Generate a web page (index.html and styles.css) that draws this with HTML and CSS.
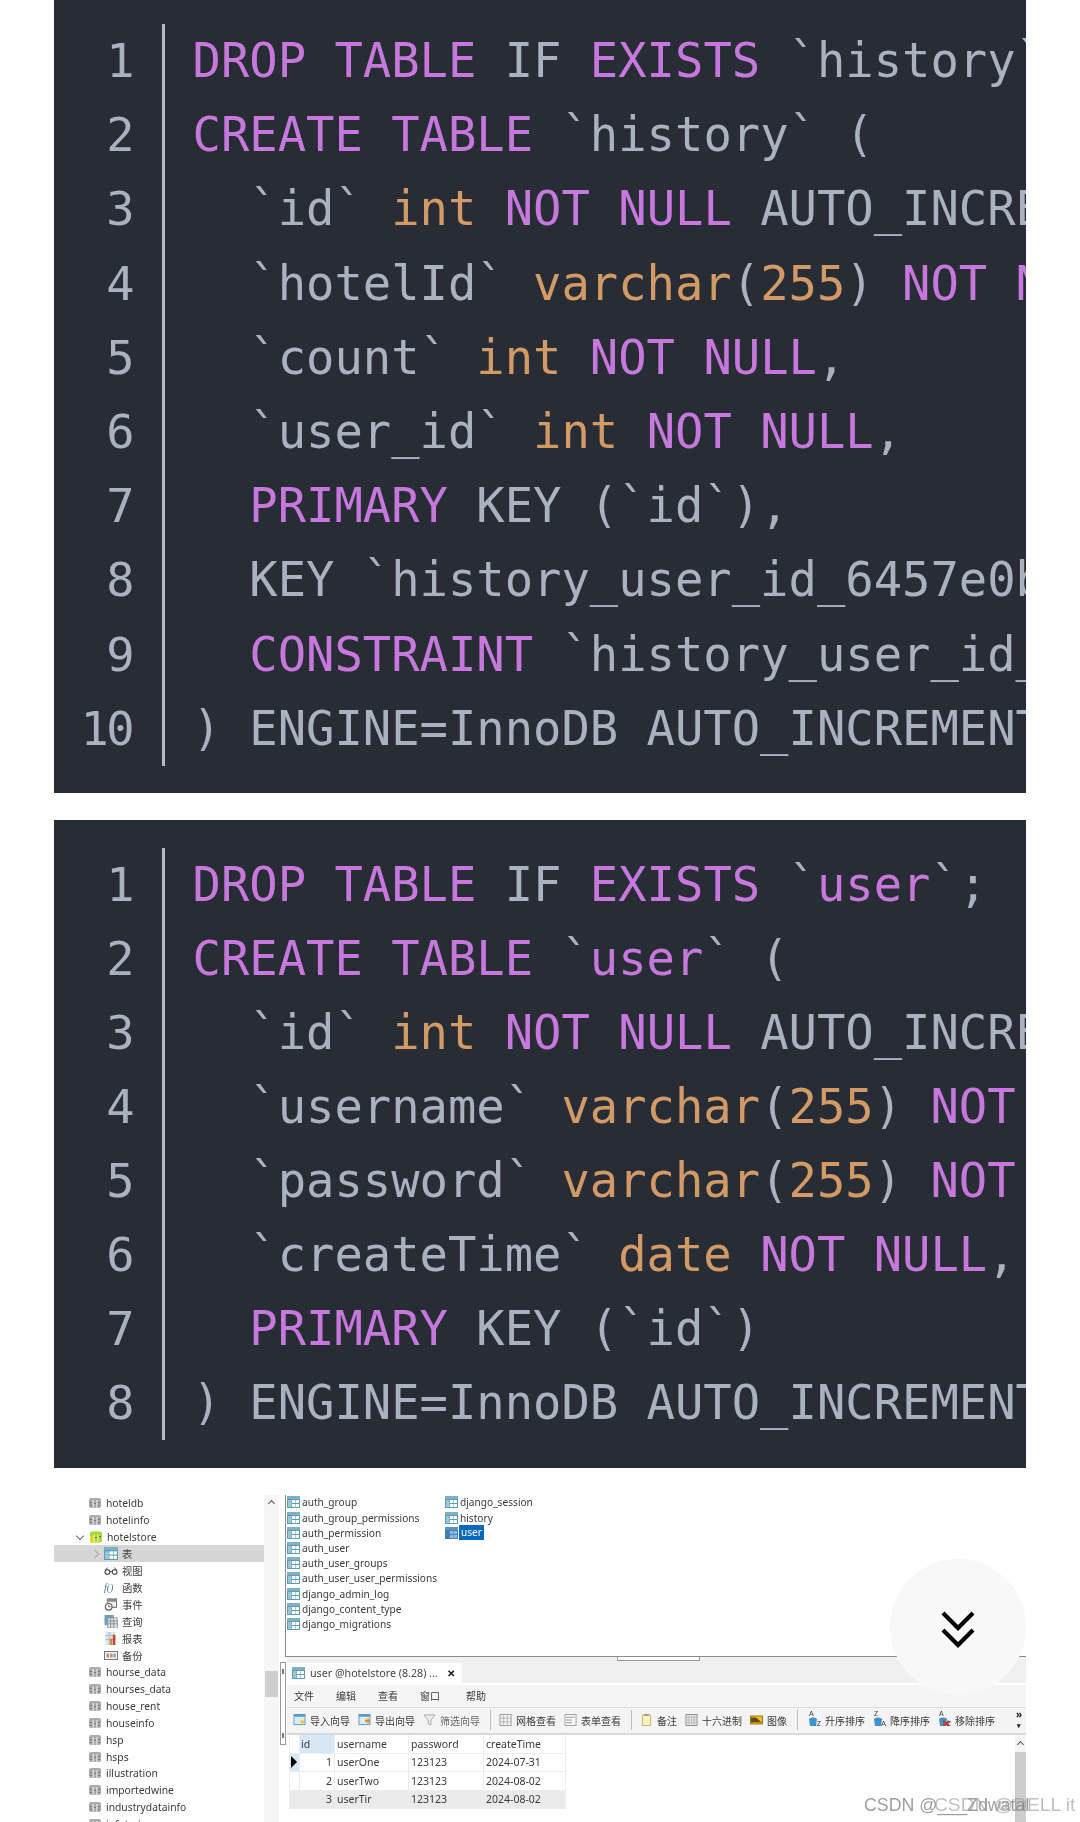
FILE: index.html
```html
<!DOCTYPE html>
<html lang="zh-CN">
<head>
<meta charset="utf-8">
<title>history / user</title>
<link rel="stylesheet" href="styles.css">
</head>
<body>
<svg class="defs" width="0" height="0" aria-hidden="true">
  <symbol id="db" viewBox="0 0 12 12"><rect x="0" y="1" width="12" height="10" rx="2" fill="#a9abad"/><rect x="3.6" y="3" width="1" height="8" fill="#eee"/><rect x="7.4" y="3" width="1" height="8" fill="#eee"/><rect x="1" y="5" width="2" height="1" fill="#777"/><rect x="5" y="6" width="2" height="1" fill="#777"/><rect x="9" y="5" width="2" height="1" fill="#777"/><rect x="1" y="8" width="2" height="1" fill="#777"/><rect x="9" y="8" width="2" height="1" fill="#777"/></symbol>
  <symbol id="dbg" viewBox="0 0 12 12"><rect x="0" y="0.5" width="12" height="11" rx="2" fill="#a8d42c"/><rect x="0" y="5" width="4" height="6.5" fill="#e8d428"/><rect x="3.6" y="3" width="1" height="8" fill="#f6f6c8"/><rect x="7.4" y="3" width="1" height="8" fill="#f6f6c8"/><rect x="5" y="6" width="2" height="1" fill="#557a10"/><rect x="9" y="5" width="2" height="1" fill="#557a10"/></symbol>
  <symbol id="tbl" viewBox="0 0 13 12"><rect x="0" y="0" width="13" height="12" fill="#5c9cb8"/><rect x="0" y="0" width="13" height="3" fill="#7fb0c4"/><rect x="5" y="4" width="3.5" height="3" fill="#fff"/><rect x="9" y="4" width="3" height="3" fill="#fff"/><rect x="5" y="8" width="3.5" height="3" fill="#fff"/><rect x="9" y="8" width="3" height="3" fill="#fff"/><rect x="1" y="4" width="3.5" height="7" fill="#9cc6d8"/></symbol>
  <symbol id="tblsel" viewBox="0 0 13 12"><rect x="0" y="0" width="13" height="12" fill="#3f7fb5"/><rect x="0" y="0" width="13" height="3" fill="#5d93bf"/><rect x="5" y="4" width="3.5" height="3" fill="#8fb9dd"/><rect x="9" y="4" width="3" height="3" fill="#8fb9dd"/><rect x="5" y="8" width="3.5" height="3" fill="#8fb9dd"/><rect x="9" y="8" width="3" height="3" fill="#8fb9dd"/></symbol>
  <symbol id="glasses" viewBox="0 0 14 12"><circle cx="3.4" cy="7.5" r="2.4" fill="none" stroke="#555" stroke-width="1.2"/><circle cx="10.6" cy="7.5" r="2.4" fill="none" stroke="#555" stroke-width="1.2"/><path d="M5.5 7h3M1.5 5.5 3.5 3M12.5 5.5 10.5 3" stroke="#555" fill="none"/></symbol>
  <symbol id="event" viewBox="0 0 14 14"><rect x="3" y="1" width="10" height="9" fill="#eee" stroke="#666"/><rect x="3" y="1" width="10" height="3" fill="#8a8a8a"/><circle cx="4.5" cy="9.5" r="3.6" fill="#fff" stroke="#555" stroke-width="1.2"/><path d="M4.5 7.5v2h2" stroke="#555" fill="none"/></symbol>
  <symbol id="query" viewBox="0 0 14 14"><rect x="0" y="0" width="10" height="11" fill="#6ba4bd"/><rect x="3" y="3" width="11" height="11" fill="#d6dde2" stroke="#777" stroke-width=".6"/><path d="M3 6.5h11M3 9.5h11M6.5 3v11M10 3v11" stroke="#777" stroke-width=".7"/></symbol>
  <symbol id="report" viewBox="0 0 14 14"><rect x="1" y="0" width="11" height="14" fill="#dfe6ea"/><path d="M1 4h11M1 8h11M5 0v14" stroke="#9db9c6"/><rect x="6" y="7" width="2.4" height="7" fill="#d08a2a"/><rect x="9" y="3" width="2.6" height="11" fill="#c4452b"/></symbol>
  <symbol id="backup" viewBox="0 0 14 11"><rect x=".5" y="1.5" width="13" height="8" fill="#f4f4f4" stroke="#777"/><rect x="2.5" y="3.5" width="2.6" height="4" fill="#999"/><rect x="6" y="3.5" width="2.6" height="4" fill="#c49a5a"/><rect x="9.5" y="3.5" width="2.2" height="4" fill="#999"/></symbol>
  <symbol id="import" viewBox="0 0 13 13"><rect x="0" y="0" width="13" height="12" fill="#5c9cb8"/><rect x="1" y="3" width="11" height="8" fill="#dcecf3"/><path d="M7 7h5l-2.500 5z" fill="#e6c72a"/></symbol>
  <symbol id="export" viewBox="0 0 13 13"><rect x="0" y="0" width="13" height="12" fill="#5c9cb8"/><rect x="1" y="3" width="11" height="8" fill="#dcecf3"/><path d="M7 6h3V4l3 3.500-3 3.500V9H7z" fill="#e2912a"/></symbol>
  <symbol id="filter" viewBox="0 0 13 13"><path d="M.5 1h12L8 6.500V12L5 10.500V6.500z" fill="#eceff0" stroke="#a0a4a6"/></symbol>
  <symbol id="grid" viewBox="0 0 13 13"><rect x=".5" y=".5" width="12" height="12" fill="#f4f4f4" stroke="#9a9a9a"/><path d="M4.500 0v13M8.500 0v13M0 4.500h13M0 8.500h13" stroke="#b4b4b4"/></symbol>
  <symbol id="form" viewBox="0 0 13 13"><rect x=".5" y=".5" width="12" height="12" fill="#fbfbfb" stroke="#9a9a9a"/><path d="M2 3.500h9M2 6.500h6M2 9.500h6" stroke="#888"/></symbol>
  <symbol id="note" viewBox="0 0 13 13"><rect x="2" y="1" width="9" height="11.500" fill="#fdf4bd" stroke="#b8a456" stroke-width=".8"/><rect x="4" y="0" width="5" height="2" fill="#999"/></symbol>
  <symbol id="hex" viewBox="0 0 13 13"><rect x=".5" y=".5" width="12" height="12" fill="#e8e8e8" stroke="#888"/><path d="M3.500 2v9M6.500 2v9M9.500 2v9M2 3.500h9M2 6.500h9M2 9.500h9" stroke="#999" stroke-dasharray="1 1"/></symbol>
  <symbol id="image" viewBox="0 0 13 11"><rect x="0" y="1" width="13" height="9" fill="#8a7a20"/><rect x="1" y="2" width="11" height="7" fill="#f2c31c"/><path d="M1 3h5l6 5H1z" fill="#6b4a18"/></symbol>
  <symbol id="asc" viewBox="0 0 13 12"><path d="M1 5c2-2 6-2 8 0l-1 7H2z" fill="#3f93c8"/></symbol>
  <symbol id="clear" viewBox="0 0 13 12"><path d="M1 5c2-2 6-2 8 0l-1 7H2z" fill="#3f93c8"/><path d="M5 7l6 5M11 7l-6 5" stroke="#d0342c" stroke-width="1.800"/></symbol>
</svg>

<main class="page">
  <section class="code code-first">
    <div class="row"><span class="no">1</span><code class="src"><b>DROP</b> <b>TABLE</b> IF <b>EXISTS</b> `history`;</code></div>
    <div class="row"><span class="no">2</span><code class="src"><b>CREATE</b> <b>TABLE</b> `history` (</code></div>
    <div class="row"><span class="no">3</span><code class="src">  `id` <i>int</i> <b>NOT</b> <b>NULL</b> AUTO_INCREMENT,</code></div>
    <div class="row"><span class="no">4</span><code class="src">  `hotelId` <i>varchar</i>(<i>255</i>) <b>NOT</b> <b>NULL</b>,</code></div>
    <div class="row"><span class="no">5</span><code class="src">  `count` <i>int</i> <b>NOT</b> <b>NULL</b>,</code></div>
    <div class="row"><span class="no">6</span><code class="src">  `user_id` <i>int</i> <b>NOT</b> <b>NULL</b>,</code></div>
    <div class="row"><span class="no">7</span><code class="src">  <b>PRIMARY</b> KEY (`id`),</code></div>
    <div class="row"><span class="no">8</span><code class="src">  KEY `history_user_id_6457e0b5`</code></div>
    <div class="row"><span class="no">9</span><code class="src">  <b>CONSTRAINT</b> `history_user_id_6457e0b5`</code></div>
    <div class="row"><span class="no">10</span><code class="src">) ENGINE=InnoDB AUTO_INCREMENT=1;</code></div>
  </section>

  <section class="code code-second">
    <div class="row"><span class="no">1</span><code class="src"><b>DROP</b> <b>TABLE</b> IF <b>EXISTS</b> `<b>user</b>`;</code></div>
    <div class="row"><span class="no">2</span><code class="src"><b>CREATE</b> <b>TABLE</b> `<b>user</b>` (</code></div>
    <div class="row"><span class="no">3</span><code class="src">  `id` <i>int</i> <b>NOT</b> <b>NULL</b> AUTO_INCREMENT,</code></div>
    <div class="row"><span class="no">4</span><code class="src">  `username` <i>varchar</i>(<i>255</i>) <b>NOT</b> <b>NULL</b>,</code></div>
    <div class="row"><span class="no">5</span><code class="src">  `password` <i>varchar</i>(<i>255</i>) <b>NOT</b> <b>NULL</b>,</code></div>
    <div class="row"><span class="no">6</span><code class="src">  `createTime` <i>date</i> <b>NOT</b> <b>NULL</b>,</code></div>
    <div class="row"><span class="no">7</span><code class="src">  <b>PRIMARY</b> KEY (`id`)</code></div>
    <div class="row"><span class="no">8</span><code class="src">) ENGINE=InnoDB AUTO_INCREMENT=1;</code></div>
  </section>

  <section class="shot">
    <nav class="tree">
      <div class="node"><svg class="ic"><use href="#db"/></svg>hoteldb</div>
      <div class="node"><svg class="ic"><use href="#db"/></svg>hotelinfo</div>
      <div class="node open"><span class="chev down"></span><svg class="ic"><use href="#dbg"/></svg>hotelstore</div>
      <div class="node sub active"><span class="chev right"></span><svg class="ic2"><use href="#tbl"/></svg>表</div>
      <div class="node sub"><svg class="ic2"><use href="#glasses"/></svg>视图</div>
      <div class="node sub"><span class="ic2 fx">f()</span>函数</div>
      <div class="node sub"><svg class="ic2"><use href="#event"/></svg>事件</div>
      <div class="node sub"><svg class="ic2"><use href="#query"/></svg>查询</div>
      <div class="node sub"><svg class="ic2"><use href="#report"/></svg>报表</div>
      <div class="node sub"><svg class="ic2"><use href="#backup"/></svg>备份</div>
      <div class="node"><svg class="ic"><use href="#db"/></svg>hourse_data</div>
      <div class="node"><svg class="ic"><use href="#db"/></svg>hourses_data</div>
      <div class="node"><svg class="ic"><use href="#db"/></svg>house_rent</div>
      <div class="node"><svg class="ic"><use href="#db"/></svg>houseinfo</div>
      <div class="node"><svg class="ic"><use href="#db"/></svg>hsp</div>
      <div class="node"><svg class="ic"><use href="#db"/></svg>hsps</div>
      <div class="node"><svg class="ic"><use href="#db"/></svg>illustration</div>
      <div class="node"><svg class="ic"><use href="#db"/></svg>importedwine</div>
      <div class="node"><svg class="ic"><use href="#db"/></svg>industrydatainfo</div>
      <div class="node"><svg class="ic"><use href="#db"/></svg>infotrain</div>
    </nav>
    <div class="treebar"><span class="caret-up"></span><span class="treethumb"></span></div>
    <div class="panes">
      <div class="objects">
        <div class="obj"><svg class="ic3"><use href="#tbl"/></svg>auth_group</div>
        <div class="obj"><svg class="ic3"><use href="#tbl"/></svg>auth_group_permissions</div>
        <div class="obj"><svg class="ic3"><use href="#tbl"/></svg>auth_permission</div>
        <div class="obj"><svg class="ic3"><use href="#tbl"/></svg>auth_user</div>
        <div class="obj"><svg class="ic3"><use href="#tbl"/></svg>auth_user_groups</div>
        <div class="obj"><svg class="ic3"><use href="#tbl"/></svg>auth_user_user_permissions</div>
        <div class="obj"><svg class="ic3"><use href="#tbl"/></svg>django_admin_log</div>
        <div class="obj"><svg class="ic3"><use href="#tbl"/></svg>django_content_type</div>
        <div class="obj"><svg class="ic3"><use href="#tbl"/></svg>django_migrations</div>
        <div class="obj"><svg class="ic3"><use href="#tbl"/></svg>django_session</div>
        <div class="obj"><svg class="ic3"><use href="#tbl"/></svg>history</div>
        <div class="obj"><svg class="ic3"><use href="#tblsel"/></svg><span class="sel">user</span></div>
      </div>
      <div class="lower">
        <div class="split"><span class="split-mark"></span><span class="split-mark"></span></div>
        <div class="work">
          <div class="tabs">
            <span class="handle"></span>
            <div class="tab"><svg class="ic3"><use href="#tbl"/></svg><span class="tab-t">user @hotelstore (8.28) ...</span><span class="tab-x">✕</span></div>
          </div>
          <div class="menu"><span class="m1">文件</span><span class="m2">编辑</span><span class="m2">查看</span><span class="m3">窗口</span><span class="m4">帮助</span></div>
          <div class="tools">
            <span class="tool"><svg class="ic3"><use href="#import"/></svg>导入向导</span>
            <span class="tool"><svg class="ic3"><use href="#export"/></svg>导出向导</span>
            <span class="tool muted"><svg class="ic3"><use href="#filter"/></svg>筛选向导</span>
            <span class="sep"></span>
            <span class="tool"><svg class="ic3"><use href="#grid"/></svg>网格查看</span>
            <span class="tool"><svg class="ic3"><use href="#form"/></svg>表单查看</span>
            <span class="sep"></span>
            <span class="tool"><svg class="ic3"><use href="#note"/></svg>备注</span>
            <span class="tool"><svg class="ic3"><use href="#hex"/></svg>十六进制</span>
            <span class="tool"><svg class="ic3"><use href="#image"/></svg>图像</span>
            <span class="sep sep-last"></span>
            <span class="tool"><span class="sort"><svg class="ic3"><use href="#asc"/></svg><em class="s1">A</em><em class="s2">Z</em></span>升序排序</span>
            <span class="tool"><span class="sort"><svg class="ic3"><use href="#asc"/></svg><em class="s1">Z</em><em class="s2">A</em></span>降序排序</span>
            <span class="tool"><span class="sort"><svg class="ic3"><use href="#clear"/></svg><em class="s1">A</em><em class="s2">Z</em></span>移除排序</span>
            <span class="more"><span>»</span><span class="more-d">▾</span></span>
          </div>
          <div class="datarea">
            <table class="data">
              <thead><tr><th class="mark"></th><th class="c-id">id</th><th class="c-u">username</th><th class="c-p">password</th><th class="c-t">createTime</th></tr></thead>
              <tbody>
                <tr><td class="mark cur"><span class="tri"></span></td><td class="num">1</td><td>userOne</td><td>123123</td><td>2024-07-31</td></tr>
                <tr><td class="mark"></td><td class="num">2</td><td>userTwo</td><td>123123</td><td>2024-08-02</td></tr>
                <tr class="hl"><td class="mark"></td><td class="num">3</td><td>userTir</td><td>123123</td><td>2024-08-02</td></tr>
              </tbody>
            </table>
            <div class="gridbar"><span class="caret-up"></span><span class="gridthumb"></span></div>
          </div>
        </div>
      </div>
    </div>
  </section>

  <button class="fab" type="button" aria-label="展开">
    <svg class="fab-ic" viewBox="0 0 36 38"><path d="M3 3 18 18 33 3M3 20 18 35 33 20" fill="none" stroke="#000" stroke-width="4.200"/></svg>
  </button>
  <div class="wm wm-a">CSDN @___Zdwatal</div>
  <div class="wm wm-b">CSDN @DELL it</div>
</main>
</body>
</html>
```

FILE: styles.css
```css
* { box-sizing: border-box; }
html, body { margin: 0; height: 1822px; overflow: hidden; background: #fff; }
.defs { position: absolute; }

.page {
  position: relative;
  height: 1822px;
  padding-left: 54px;
  width: 1080px;
  overflow: hidden;
  display: flex;
  flex-direction: column;
  font-family: "Noto Sans", "Noto Sans CJK SC", sans-serif;
}

/* code blocks */
.code {
  width: 972px;
  flex: none;
  background: #282c34;
  overflow: hidden;
  font-family: "DejaVu Sans Mono", monospace;
  font-size: 47.15px;
  color: #abb2bf;
  filter: blur(.3px);
}
.code-first { padding: 24px 0 27px; margin-bottom: 27px; line-height: 74.2px; }
.code-second { padding: 27.5px 0; margin-bottom: 27px; line-height: 74.1px; }
.row { display: flex; }
.no {
  flex: none;
  width: 108px;
  padding-right: 30px;
  text-align: right;
  font-size: 47px;
  letter-spacing: -2.5px;
}
.src {
  flex: none;
  font: inherit;
  white-space: pre;
  border-left: 3px solid #b7bac0;
  padding-left: 27.5px;
}
.src b { font-weight: 400; color: #c678dd; }
.src i { font-style: normal; color: #d19a66; }

/* database client screenshot */
.shot {
  width: 972px;
  height: 327px;
  flex: none;
  display: grid;
  grid-template-columns: 210px 15px 747px;
  overflow: hidden;
  font-size: 10.300px;
  color: #3a3a3a;
  filter: blur(.45px);
}
.tree { overflow: hidden; }
.node {
  height: 16.900px;
  display: flex;
  align-items: center;
  padding-left: 35px;
  white-space: nowrap;
}
.node.open { padding-left: 22px; }
.node.sub { padding-left: 50px; }
.node.active { background: #d6d6d6; padding-left: 39px; }
.ic { width: 12px; height: 12px; margin-right: 5px; flex: none; }
.ic2 { width: 14px; height: 13px; margin-right: 4px; flex: none; }
.fx { font: italic 10px "Liberation Serif", serif; color: #3f78a8; display: block; line-height: 13px; }
.chev { width: 6px; height: 6px; flex: none; border: solid #666; border-width: 0 1.300px 1.300px 0; }
.chev.down { transform: rotate(45deg); margin: -3px 7px 0 1px; }
.chev.right { transform: rotate(-45deg); margin: 0 6px 0 -1px; border-color: #aaa; }

.treebar { background: #f6f6f6; position: relative; padding-top: 6px; display: flex; flex-direction: column; align-items: center; }
.caret-up { width: 5px; height: 5px; flex: none; border: solid #555; border-width: 1.300px 0 0 1.300px; transform: rotate(45deg); }
.treethumb { width: 13px; height: 26px; background: #cfcfcf; margin-top: 165px; }

.panes { display: flex; flex-direction: column; min-width: 0; }
.objects {
  height: 162px;
  margin-left: 6px;
  padding-left: 1px;
  border-left: 1px solid #8c8c8c;
  border-bottom: 1px solid #8c8c8c;
  display: grid;
  grid-auto-flow: column;
  grid-template-rows: repeat(9, 15.200px);
  grid-template-columns: 158px 1fr;
  align-content: start;
  font-size: 10.150px;
}
.obj { display: flex; align-items: center; white-space: nowrap; }
.ic3 { width: 13px; height: 12px; margin-right: 2px; flex: none; }
.sel { background: #0a68bd; color: #fff; padding: 0 2px; line-height: 15px; margin-left: -1px; }

.lower { flex: 1; display: flex; min-height: 0; padding-left: 1px; }
.split {
  width: 6px;
  flex: none;
  display: flex;
  flex-direction: column;
  justify-content: space-between;
  align-items: center;
  height: 83px;
  margin-top: 5px;
  padding: 6px 0;
  border: 1px solid #9a9a9a;
}
.split-mark { width: 2px; height: 5px; background: #777; }
.work { flex: 1; min-width: 0; display: flex; flex-direction: column; margin-left: 1px; }
.tabs { position: relative; height: 26px; background: #f0f0f0; padding-top: 6px; flex: none; }
.handle {
  position: absolute; right: 326px; top: 0; width: 83px; height: 4px;
  background: #fff; border: 1px solid #999; border-top: 0;
}
.tab {
  width: 175px; height: 20px; background: #fff;
  display: flex; align-items: center; padding-left: 5px;
  font-size: 10.700px; color: #444; white-space: nowrap;
}
.tab .ic3 { margin-right: 5px; }
.tab-t { width: 137px; }
.tab-x { font-size: 10px; color: #111; font-weight: 700; }
.menu {
  flex: none; height: 23px; margin-top: 2px;
  background: #f5f5f5;
  display: flex; align-items: center;
  padding-left: 7px;
  font-size: 10px;
  border-bottom: 1px solid #dcdcdc;
}
.m1 { width: 42px; }
.m2 { width: 42px; }
.m3 { width: 46px; }
.tools {
  flex: none; height: 27px;
  background: #f4f4f4;
  display: flex; align-items: center; gap: 8px;
  padding-left: 6px;
  font-size: 10px;
  border-bottom: 2px solid #d9d9d9;
  white-space: nowrap;
  position: relative;
}
.tool { display: flex; align-items: center; }
.tool .ic3 { margin-right: 4px; }
.muted { color: #666; }
.sep { width: 1px; height: 20px; background: #bdbdbd; margin-left: 2px; }
.sep-last { margin-right: 2px; }
.sort { position: relative; width: 13px; height: 13px; margin-right: 4px; display: block; }
.sort em { position: absolute; font: normal 7px/8px "Liberation Sans", sans-serif; color: #333; }
.s1 { left: 1px; top: -4px; }
.s2 { right: 0; bottom: -1px; }
.more { margin-left: auto; margin-right: 2px; width: 10px; display: flex; flex-direction: column; align-items: center; font-size: 10px; line-height: 11px; font-weight: 700; color: #222; }
.more-d { font-size: 7px; }

.datarea { flex: 1; display: flex; justify-content: space-between; min-height: 0; padding-left: 2px; }
.data { margin-top: -1px; border-collapse: collapse; table-layout: fixed; width: 276px; height: 74px; font-size: 10.500px; align-self: flex-start; }
.data th, .data td {
  border: 1px solid #ececec;
  padding: 0 2px;
  font-weight: 400;
  text-align: left;
  height: 18.400px;
  white-space: nowrap;
}
.data th { height: 19px; }
.data .c-id { padding-left: 1px; }
.mark { width: 10px; }
.c-id { width: 35px; background: #d7e8f7; }
.c-u { width: 74px; }
.c-p { width: 75px; }
.c-t { width: 82px; }
.data .num { text-align: right; }
.data .cur { background: #d7e8f7; padding: 0; }
.hl td { background: #ebebeb; }
.tri { display: block; width: 0; height: 0; margin-left: 1px; border: solid transparent; border-width: 6px 0 6px 6px; border-left-color: #000; }
.gridbar { width: 11px; flex: none; background: #f6f6f6; display: flex; flex-direction: column; align-items: center; padding-top: 7px; }
.gridthumb { width: 11px; flex: 1; background: #cdcdcd; margin-top: 5px; }

/* overlays */
.fab {
  position: absolute; left: 890px; top: 1559px;
  width: 136px; height: 136px; border-radius: 50%;
  border: 0; background: #f8f8f9; padding: 4px 0 0;
  display: flex; align-items: center; justify-content: center;
}
.fab-ic { width: 36px; height: 38px; display: block; }
.wm {
  position: absolute; top: 1793px; white-space: nowrap;
  font-family: "Liberation Sans", sans-serif; line-height: 24px;
  filter: blur(.5px);
}
.wm-a { left: 864px; font-size: 17.800px; color: rgba(95, 95, 95, .6); }
.wm-b { left: 934px; font-size: 19.200px; color: rgba(150, 150, 150, .6); }
```
